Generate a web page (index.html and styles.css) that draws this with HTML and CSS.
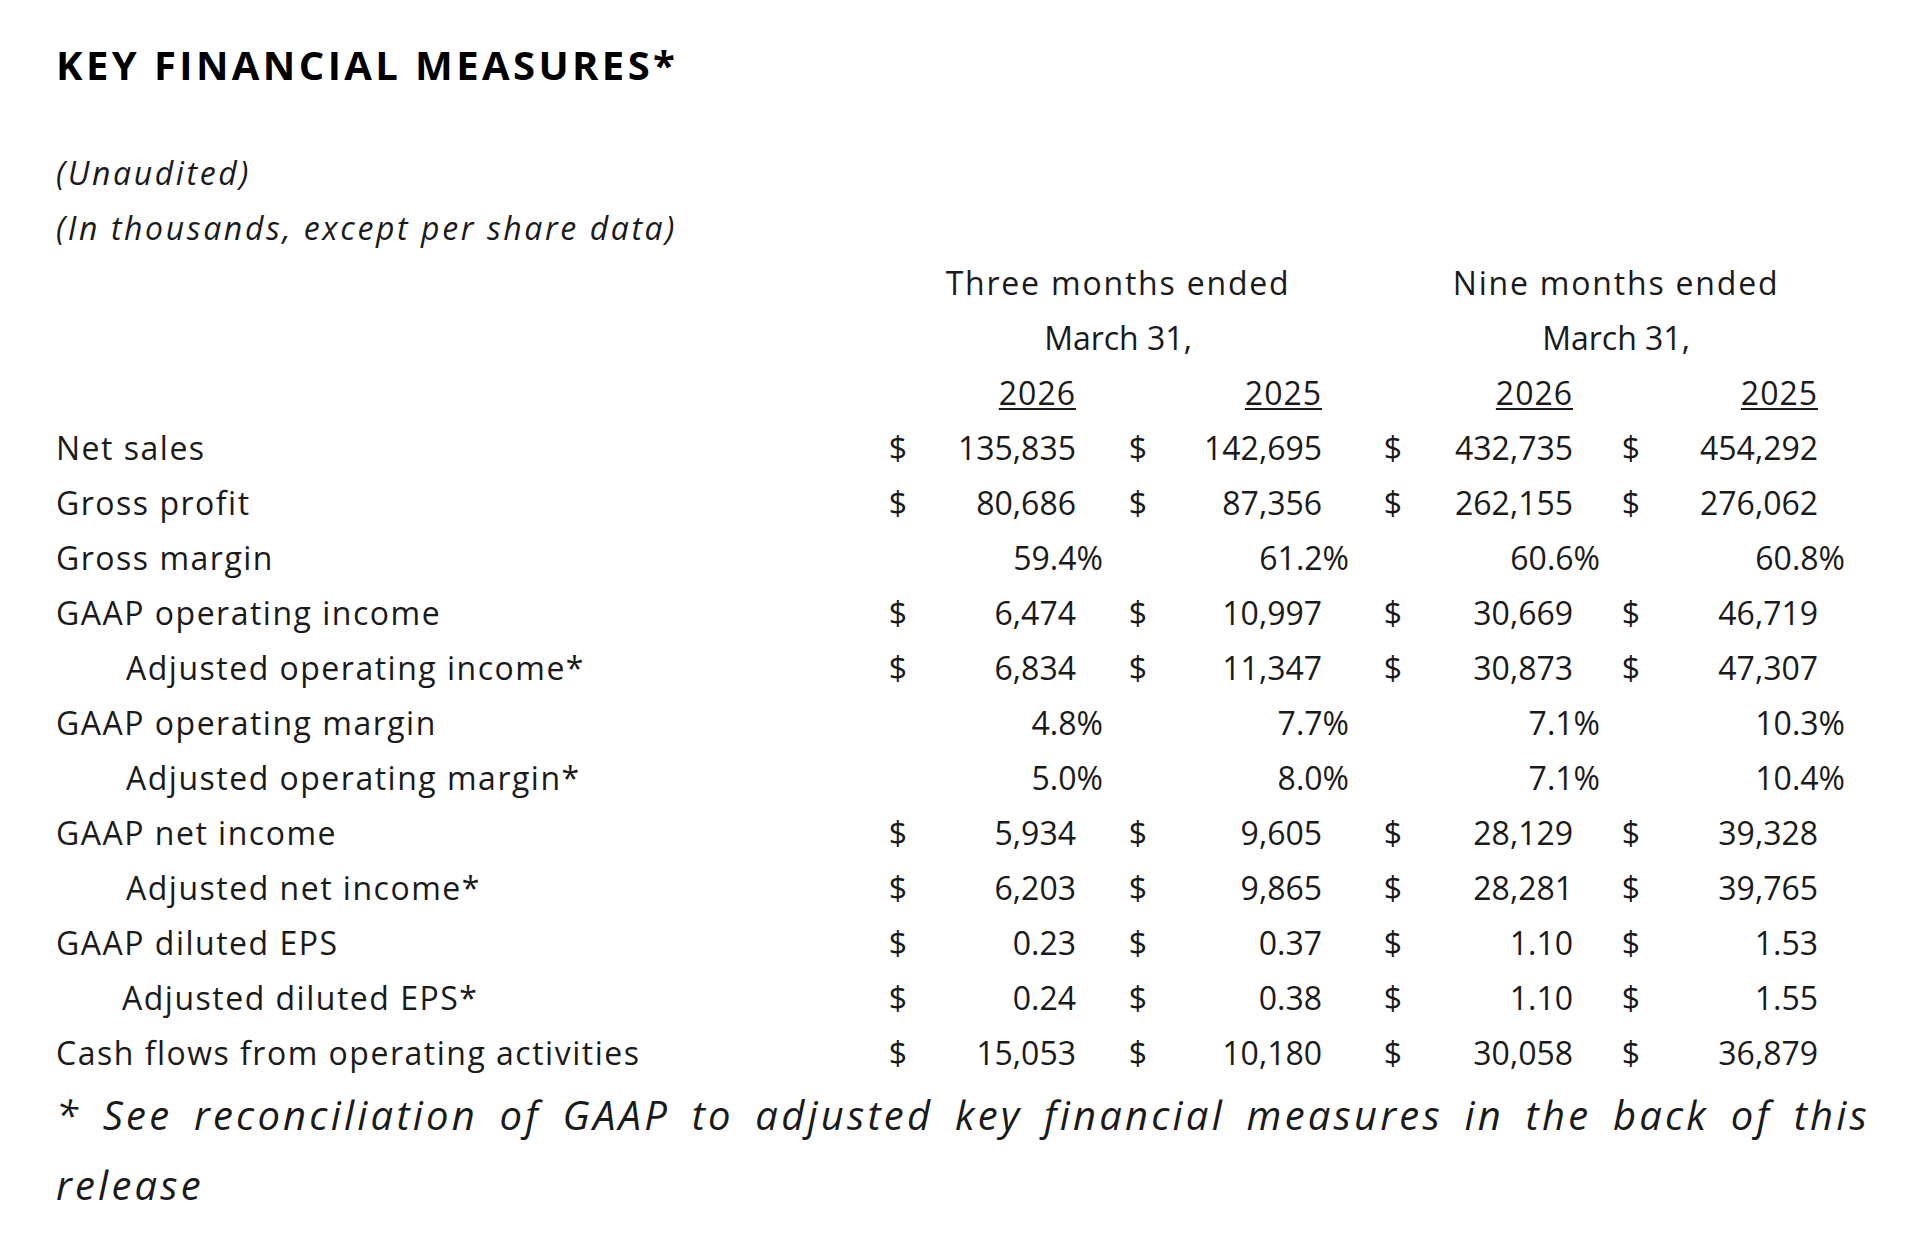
FILE: index.html
```html
<!DOCTYPE html>
<html lang="en">
<head>
    <meta charset="UTF-8">
    <title>Key Financial Measures</title>
    <link rel="stylesheet" href="styles.css">
</head>
<body>
    <div class="report">
        <h1 class="report-title">KEY FINANCIAL MEASURES*</h1>

        <div class="note">(Unaudited)</div>
        <div class="note">(In thousands, except per share data)</div>

        <table class="measures">
            <colgroup>
                <col class="c-label">
                <col class="c-cur1"><col class="c-val1">
                <col class="c-cur2"><col class="c-val2">
                <col class="c-cur3"><col class="c-val3">
                <col class="c-cur4"><col class="c-val4">
            </colgroup>
            <tr>
                <td></td>
                <td colspan="4" class="period">Three months ended</td>
                <td colspan="4" class="period period-nine">Nine months ended</td>
            </tr>
            <tr>
                <td></td>
                <td colspan="4" class="period period-date">March 31,</td>
                <td colspan="4" class="period period-date period-nine">March 31,</td>
            </tr>
            <tr>
                <td></td>
                <td></td><td class="num"><span class="year">2026</span></td>
                <td></td><td class="num"><span class="year">2025</span></td>
                <td></td><td class="num"><span class="year">2026</span></td>
                <td></td><td class="num"><span class="year">2025</span></td>
            </tr>
            <tr>
                <td class="label">Net sales</td>
                <td class="cur">$</td><td class="num">135,835</td>
                <td class="cur">$</td><td class="num">142,695</td>
                <td class="cur">$</td><td class="num">432,735</td>
                <td class="cur">$</td><td class="num">454,292</td>
            </tr>
            <tr>
                <td class="label">Gross profit</td>
                <td class="cur">$</td><td class="num">80,686</td>
                <td class="cur">$</td><td class="num">87,356</td>
                <td class="cur">$</td><td class="num">262,155</td>
                <td class="cur">$</td><td class="num">276,062</td>
            </tr>
            <tr>
                <td class="label">Gross margin</td>
                <td></td><td class="pct">59.4%</td>
                <td></td><td class="pct">61.2%</td>
                <td></td><td class="pct">60.6%</td>
                <td></td><td class="pct">60.8%</td>
            </tr>
            <tr>
                <td class="label">GAAP operating income</td>
                <td class="cur">$</td><td class="num">6,474</td>
                <td class="cur">$</td><td class="num">10,997</td>
                <td class="cur">$</td><td class="num">30,669</td>
                <td class="cur">$</td><td class="num">46,719</td>
            </tr>
            <tr>
                <td class="label indent">Adjusted operating income*</td>
                <td class="cur">$</td><td class="num">6,834</td>
                <td class="cur">$</td><td class="num">11,347</td>
                <td class="cur">$</td><td class="num">30,873</td>
                <td class="cur">$</td><td class="num">47,307</td>
            </tr>
            <tr>
                <td class="label">GAAP operating margin</td>
                <td></td><td class="pct">4.8%</td>
                <td></td><td class="pct">7.7%</td>
                <td></td><td class="pct">7.1%</td>
                <td></td><td class="pct">10.3%</td>
            </tr>
            <tr>
                <td class="label indent">Adjusted operating margin*</td>
                <td></td><td class="pct">5.0%</td>
                <td></td><td class="pct">8.0%</td>
                <td></td><td class="pct">7.1%</td>
                <td></td><td class="pct">10.4%</td>
            </tr>
            <tr>
                <td class="label">GAAP net income</td>
                <td class="cur">$</td><td class="num">5,934</td>
                <td class="cur">$</td><td class="num">9,605</td>
                <td class="cur">$</td><td class="num">28,129</td>
                <td class="cur">$</td><td class="num">39,328</td>
            </tr>
            <tr>
                <td class="label indent">Adjusted net income*</td>
                <td class="cur">$</td><td class="num">6,203</td>
                <td class="cur">$</td><td class="num">9,865</td>
                <td class="cur">$</td><td class="num">28,281</td>
                <td class="cur">$</td><td class="num">39,765</td>
            </tr>
            <tr>
                <td class="label">GAAP diluted EPS</td>
                <td class="cur">$</td><td class="num">0.23</td>
                <td class="cur">$</td><td class="num">0.37</td>
                <td class="cur">$</td><td class="num">1.10</td>
                <td class="cur">$</td><td class="num">1.53</td>
            </tr>
            <tr>
                <td class="label indent indent-sm">Adjusted diluted EPS*</td>
                <td class="cur">$</td><td class="num">0.24</td>
                <td class="cur">$</td><td class="num">0.38</td>
                <td class="cur">$</td><td class="num">1.10</td>
                <td class="cur">$</td><td class="num">1.55</td>
            </tr>
            <tr>
                <td class="label">Cash flows from operating activities</td>
                <td class="cur">$</td><td class="num">15,053</td>
                <td class="cur">$</td><td class="num">10,180</td>
                <td class="cur">$</td><td class="num">30,058</td>
                <td class="cur">$</td><td class="num">36,879</td>
            </tr>
        </table>

        <p class="footnote">* See reconciliation of GAAP to adjusted key financial measures in the back of this release</p>
    </div>
</body>
</html>
```

FILE: styles.css
```css
* {
    margin: 0;
    padding: 0;
    box-sizing: border-box;
}

body {
    font-family: 'Open Sans', 'Liberation Sans', sans-serif;
    background: #ffffff;
    color: #1a1a1a;
}

.report {
    padding: 37px 0 0 56px;
    width: 1890px;
}

.report-title {
    font-size: 40px;
    font-weight: 700;
    line-height: 55px;
    letter-spacing: 3.4px;
    color: #000;
    margin-bottom: 53px;
}

.note {
    font-size: 32px;
    font-style: italic;
    line-height: 55px;
    letter-spacing: 2.6px;
}

.measures {
    border-collapse: collapse;
    table-layout: fixed;
    width: 1789px;
    font-size: 32px;
}

.c-label { width: 831px; }
.c-cur1 { width: 40px; }
.c-val1 { width: 176px; }
.c-cur2 { width: 64px; }
.c-val2 { width: 182px; }
.c-cur3 { width: 73px; }
.c-val3 { width: 178px; }
.c-cur4 { width: 60px; }
.c-val4 { width: 185px; }

.measures td {
    height: 55px;
    padding: 0;
    white-space: nowrap;
    vertical-align: middle;
}

.measures .label {
    letter-spacing: 1.5px;
}

.measures .label.indent {
    padding-left: 70px;
}

.measures .label.indent-sm {
    padding-left: 66px;
}

.measures .period {
    text-align: center;
    letter-spacing: 1.8px;
}

.measures .period-date {
    letter-spacing: 0;
}

.measures .period-nine {
    padding-left: 38px;
}

.measures .cur {
    text-align: right;
    padding-right: 20px;
}

.measures .num {
    text-align: right;
    padding-right: 27px;
}

.measures .pct {
    text-align: right;
}

.year {
    text-decoration: underline;
    text-decoration-thickness: 2px;
    text-underline-offset: 3px;
    letter-spacing: 1px;
}

.footnote {
    font-size: 40px;
    font-style: italic;
    line-height: 70px;
    letter-spacing: 3.2px;
    word-spacing: 8px;
    width: 1840px;
}
```
